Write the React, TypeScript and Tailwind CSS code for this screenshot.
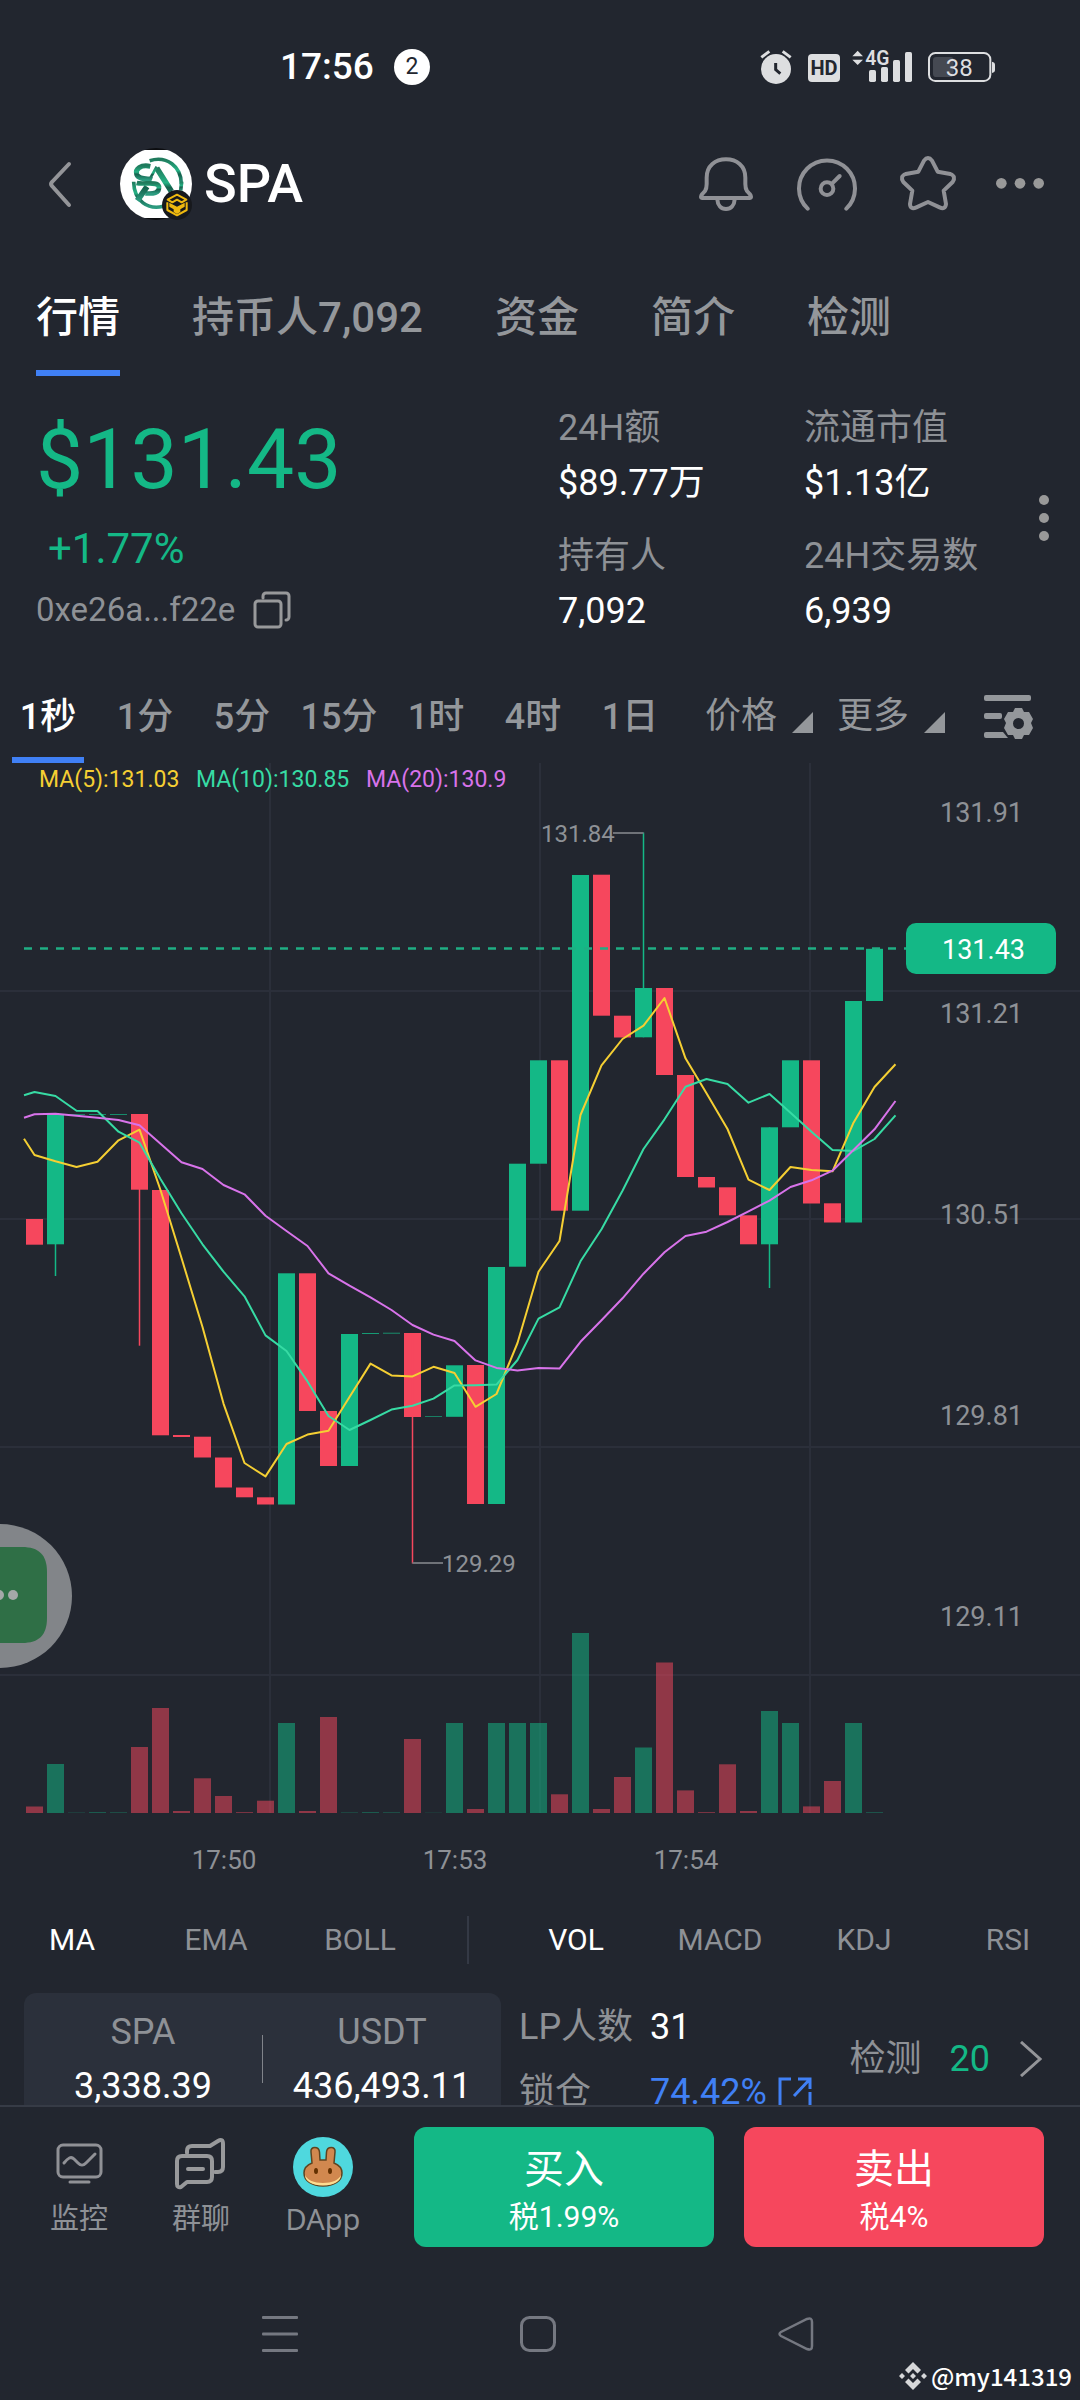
import {useState} from 'react';
import clsx from 'clsx';

type Side = 'up' | 'down';

interface Candle {
  side: Side;
  top: number;
  bottom: number;
  volume: number;
  high?: number;
  low?: number;
}

const GREEN = '#14b886';
const RED = '#f6475d';
const VOLUME_BASE = 1813;
const FIRST_X = 34.5;
const STEP = 21;
const BAR_WIDTH = 17;

const c = (
  side: Side,
  top: number,
  bottom: number,
  volume: number,
  wick: {high?: number; low?: number} = {},
): Candle => ({side, top, bottom, volume, ...wick});

const CANDLES: Candle[] = [
  c('down', 1219, 1244.7, 6.5),
  c('up', 1114.3, 1244.3, 49, {low: 1276}),
  c('up', 1114, 1114.6, 0.3),
  c('up', 1114, 1114.7, 0.7),
  c('up', 1114, 1114.7, 0.5),
  c('down', 1114, 1189.7, 66, {low: 1345.7}),
  c('down', 1190, 1435.3, 105),
  c('down', 1435, 1437, 2),
  c('down', 1436.7, 1457.5, 34.7),
  c('down', 1457.5, 1487.5, 17),
  c('down', 1487.5, 1497.3, 0.8),
  c('down', 1497.3, 1504.5, 12.3),
  c('up', 1273.3, 1504.5, 90),
  c('down', 1273.3, 1411, 2),
  c('down', 1411, 1466, 96),
  c('up', 1334, 1466, 0.4),
  c('up', 1333, 1333.8, 0.7),
  c('up', 1332.8, 1333.5, 0.5),
  c('down', 1333, 1417, 74, {low: 1563.5}),
  c('up', 1416.4, 1417, 0.2),
  c('up', 1365.3, 1416.8, 90),
  c('down', 1365, 1504, 4),
  c('up', 1267, 1504, 90),
  c('up', 1163.7, 1266.7, 90),
  c('up', 1060.3, 1163.7, 90),
  c('down', 1060.3, 1210.7, 18.7),
  c('up', 875, 1210.7, 180),
  c('down', 874.7, 1015.7, 4),
  c('down', 1015.7, 1037.5, 36),
  c('up', 988, 1037.3, 65.5, {high: 832.5}),
  c('down', 988, 1075, 150.5),
  c('down', 1075, 1177, 22.6),
  c('down', 1177, 1187.5, 0.8),
  c('down', 1187.3, 1215.3, 48.7),
  c('down', 1215.3, 1244.3, 2),
  c('up', 1127.3, 1244.3, 102, {low: 1288}),
  c('up', 1060.3, 1127.3, 90),
  c('down', 1060.3, 1203.5, 6.6),
  c('down', 1203.3, 1222.5, 32),
  c('up', 1001, 1222.5, 90),
  c('up', 948.8, 1001, 0.6),
];

// the first value of every series sits on the left edge of the plot
const MA5 = [
  1138.7, 1155, 1161.3, 1167, 1161.7, 1140.3, 1129.7, 1190, 1258, 1327, 1403.6,
  1463, 1476.4, 1444, 1434.6, 1430.7, 1397, 1363.6, 1375.4, 1376.4, 1366.8,
  1373, 1406.8, 1394, 1343, 1271.7, 1241, 1115, 1065.3, 1039, 1025.7, 998,
  1058.3, 1093.3, 1129, 1179.7, 1190, 1167, 1170, 1171.3, 1122.7, 1087, 1064.3,
];
const MA10 = [
  1095.3, 1092, 1096, 1110.7, 1111, 1131.7, 1142.7, 1179, 1213.3, 1244.3,
  1271.7, 1296.3, 1335.4, 1351, 1381.4, 1416, 1430, 1420, 1409.6, 1405.7,
  1398.6, 1385.4, 1385.2, 1384.6, 1360, 1318.6, 1307.3, 1261.3, 1229.3, 1190.7,
  1149, 1119.3, 1086.7, 1079, 1084, 1102.7, 1094, 1112.7, 1131.7, 1150, 1151,
  1139, 1115.3,
];
const MA20 = [
  1117.7, 1114.3, 1113.7, 1115.7, 1117.7, 1120, 1125.3, 1143.7, 1162.3, 1169,
  1185, 1194.3, 1215.7, 1231, 1246, 1273.3, 1285.7, 1297.3, 1310, 1325, 1334.6,
  1341, 1360.4, 1367.9, 1370.4, 1367.9, 1368.6, 1341.8, 1320.2, 1298.3, 1273.7,
  1252.3, 1236, 1231.7, 1222, 1211.3, 1200.7, 1187, 1180.3, 1170.7, 1150,
  1129.3, 1101,
];

const toPoints = (values: number[]) =>
  values
    .map((y, i) => {
      const x = i === 0 ? 24 : Math.min(FIRST_X + (i - 1) * STEP, 896);
      return `${x},${y}`;
    })
    .join(' ');

const TABS = ['行情', '持币人7,092', '资金', '简介', '检测'];
const INTERVALS = ['1秒', '1分', '5分', '15分', '1时', '4时', '1日'];
const PRICE_AXIS = [
  {label: '131.91', y: 822},
  {label: '131.21', y: 1023},
  {label: '130.51', y: 1224},
  {label: '129.81', y: 1425},
  {label: '129.11', y: 1626},
];
const TIME_AXIS = [
  {label: '17:50', x: 224},
  {label: '17:53', x: 455},
  {label: '17:54', x: 686},
];

function StatusBar() {
  return (
    <div className="flex h-[134px] shrink-0 items-center pl-[280px] pr-[84px]">
      <span className="text-[37px] font-medium leading-[48px]">17:56</span>
      <span className="ml-5 flex h-9 w-9 items-center justify-center rounded-full bg-white text-[23px] leading-9 text-[#22262f]">
        2
      </span>
      <svg
        className="ml-auto h-[38px] w-[236px]"
        viewBox="240 54 708 114"
        fill="#dddee0"
        aria-hidden="true"
      >
        {/* alarm */}
        <circle cx="288" cy="117" r="45" />
        <path
          d="M244 82l24-18M332 82l-24-18"
          stroke="#dddee0"
          strokeWidth="9"
          fill="none"
        />
        <path
          d="M287 99v20l14 12"
          stroke="#22262f"
          strokeWidth="9"
          fill="none"
        />
        {/* HD */}
        <rect x="384" y="72" width="96" height="84" rx="12" />
        <text
          x="432"
          y="135"
          fontSize="60"
          fontWeight="700"
          textAnchor="middle"
          fill="#22262f"
        >
          HD
        </text>
        {/* signal */}
        <path d="M517 79l16-17 16 17zM517 89l16 16 16-16z" />
        <text x="556" y="105" fontSize="58" fontWeight="600">
          4G
        </text>
        <rect x="567" y="120" width="21" height="36" rx="5" />
        <rect x="603" y="111" width="21" height="45" rx="5" />
        <rect x="639" y="90" width="21" height="66" rx="5" />
        <rect x="675" y="66" width="21" height="90" rx="5" />
        {/* battery */}
        <rect
          x="747"
          y="69"
          width="184"
          height="84"
          rx="19"
          fill="none"
          stroke="#dddee0"
          strokeWidth="6"
        />
        <rect x="759" y="81" width="62" height="60" rx="10" fill="#454952" />
        <path d="M936 95q9 2 9 9v16q0 7-9 9z" />
        <text x="838" y="137" fontSize="72" textAnchor="middle">
          38
        </text>
      </svg>
    </div>
  );
}

function TokenLogo() {
  return (
    <svg className="ml-12 h-[72px] w-[72px]" viewBox="300 354 216 216">
      <defs>
        <linearGradient id="spa" x1="0" y1="0" x2="0" y2="1">
          <stop offset="0" stopColor="#1f7a5c" />
          <stop offset="0.45" stopColor="#25b285" />
          <stop offset="0.6" stopColor="#14614c" />
          <stop offset="1" stopColor="#2c9c80" />
        </linearGradient>
        <clipPath id="logo">
          <circle cx="408" cy="462" r="108" />
        </clipPath>
      </defs>
      <g clipPath="url(#logo)">
        <rect x="300" y="354" width="216" height="216" fill="#0c0d10" />
        <rect x="300" y="360" width="216" height="204" fill="#fff" />
      </g>
      <g fill="none" stroke="url(#spa)" strokeWidth="11">
        <path d="M389 392C440 376 484 410 484 462" />
        <path d="M341 455C342 515 385 540 430 529" />
        <path
          d="M391 409C362 403 345 417 350 433C356 450 386 445 396 449"
          strokeWidth="15"
        />
        <path
          d="M350 459C370 465 412 452 417 470C419 490 400 492 376 490"
          strokeWidth="14"
        />
        <path d="M381 470L352 512M410 414L454 484" strokeWidth="17" />
        <path d="M410 410L388 450" strokeWidth="8" />
        <path d="M485 455L482 482" strokeWidth="11" />
      </g>
      <circle cx="471" cy="525" r="45" fill="#17191d" />
      <g
        fill="none"
        stroke="#efb90f"
        strokeWidth="6"
        strokeLinejoin="round"
      >
        <path d="M443 509L471 494L499 509L485 517L471 509L457 517Z" />
        <path d="M442 517V540L471 556L500 540V517" />
      </g>
      <path
        d="M448 518L471 530L494 518V530L481 538V546L471 552L461 546V538L448 530Z"
        fill="#efb90f"
      />
    </svg>
  );
}

function Header() {
  return (
    <header className="flex h-[100px] shrink-0 items-center pl-12 pr-[30px]">
      <button type="button" aria-label="返回">
        <svg
          className="h-12 w-6"
          viewBox="0 0 24 48"
          fill="none"
          stroke="#949599"
          strokeWidth="4"
          strokeLinecap="round"
          strokeLinejoin="round"
        >
          <path d="M21 4L4 22Q2 24 4 26L21 45" />
        </svg>
      </button>
      <TokenLogo />
      <h1 className="ml-3 text-[54px] font-medium leading-[64px]">SPA</h1>
      <div className="ml-auto flex items-center gap-[41px] text-[#909196]">
        <button type="button" aria-label="提醒">
          <svg
            className="h-[60px] w-[60px]"
            viewBox="45 372 180 180"
            fill="none"
            stroke="currentColor"
            strokeWidth="12"
            strokeLinejoin="round"
          >
            <path d="M63 504H207C212 504 210 496 206 492L198 483Q193 476 193 462V443C193 407 167 388 135 388C103 388 77 407 77 443V462Q77 476 72 483L64 492C60 496 58 504 63 504Z" />
            <path d="M109 508C110 526 120 537 135 537C150 537 160 526 161 508" />
          </svg>
        </button>
        <button type="button" aria-label="仪表">
          <svg
            className="h-[60px] w-[60px]"
            viewBox="348 372 180 180"
            fill="none"
            stroke="currentColor"
            strokeWidth="12"
            strokeLinecap="round"
          >
            <path d="M380 536A84 84 0 1 1 496 536" />
            <circle cx="438" cy="476" r="19" />
            <path d="M453 461L476 438" />
          </svg>
        </button>
        <button type="button" aria-label="收藏">
          <svg
            className="h-[60px] w-[60px]"
            viewBox="654 372 180 180"
            fill="none"
            stroke="currentColor"
            strokeWidth="12"
            strokeLinejoin="round"
          >
            <path d="M732 392Q744 376 756 392L773 425L811 432Q829 439 818 456L791 482L798 522Q796 540 779 532L744 516L709 532Q691 540 690 522L697 482L670 456Q659 439 677 432L715 425Z" />
          </svg>
        </button>
      </div>
      <button type="button" aria-label="更多操作" className="ml-8">
        <svg
          className="h-[60px] w-[60px]"
          viewBox="930 372 180 180"
          fill="#999"
        >
          <circle cx="964" cy="460" r="16" />
          <circle cx="1020" cy="460" r="16" />
          <circle cx="1076" cy="460" r="16" />
        </svg>
      </button>
    </header>
  );
}

function Tabs() {
  const [active, setActive] = useState(TABS[0]);
  return (
    <nav className="flex shrink-0 gap-[72px] px-9 pt-[52px]">
      {TABS.map((tab) => (
        <button
          key={tab}
          type="button"
          onClick={() => setActive(tab)}
          className={clsx(
            'h-[90px] whitespace-nowrap border-b-[6px] pb-5 text-[42px] font-medium leading-[60px]',
            tab === active
              ? 'border-[#4080f5] text-white'
              : 'border-transparent text-[#94979b]',
          )}
        >
          {tab}
        </button>
      ))}
    </nav>
  );
}

function Stat({label, value}: {label: string; value: string}) {
  return (
    <div className="whitespace-nowrap text-4xl">
      <dt className="leading-[55px] text-[#8e9196]">{label}</dt>
      <dd className="leading-[55px]">{value}</dd>
    </div>
  );
}

function Overview() {
  return (
    <section className="flex shrink-0 pl-9 pr-[30px]">
      <div className="flex-1 pt-[34px]">
        <p className="text-[84px] leading-[100px] text-[#14b886]">$131.43</p>
        <p className="mt-[11px] pl-3 text-[42px] leading-[56px] text-[#14b886]">
          +1.77%
        </p>
        <div className="mt-[13px] flex items-center gap-[18px]">
          <span className="text-[33px] leading-10 text-[#8e9196]">
            0xe26a...f22e
          </span>
          <button type="button" aria-label="复制地址">
            <svg
              className="h-[38px] w-[38px]"
              viewBox="0 0 38 38"
              fill="none"
              stroke="#98999b"
              strokeWidth="3"
              strokeLinecap="round"
              strokeLinejoin="round"
            >
              <rect x="2" y="10" width="26" height="26" rx="3" />
              <path d="M10 7V5a3 3 0 0 1 3-3h20a3 3 0 0 1 3 3v21a3 3 0 0 1-3 3" />
            </svg>
          </button>
        </div>
      </div>
      <dl className="grid grid-cols-[246px_220px] gap-y-[18px] pt-[25px]">
        <Stat label="24H额" value="$89.77万" />
        <Stat label="流通市值" value="$1.13亿" />
        <Stat label="持有人" value="7,092" />
        <Stat label="24H交易数" value="6,939" />
      </dl>
      <button
        type="button"
        aria-label="更多数据"
        className="flex w-[26px] items-center justify-end pt-5"
      >
        <svg className="h-12 w-3" viewBox="0 0 12 48" fill="#999">
          <circle cx="6" cy="6" r="5" />
          <circle cx="6" cy="24" r="5" />
          <circle cx="6" cy="42" r="5" />
        </svg>
      </button>
    </section>
  );
}

function Dropdown({label, options}: {label: string; options: string[]}) {
  return (
    <div className="flex items-center gap-[15px]">
      <select
        aria-label={label}
        className="w-[72px] appearance-none bg-transparent p-0 pb-0.5 text-4xl leading-[48px] text-[#94979b] outline-none"
      >
        {options.map((option) => (
          <option key={option}>{option}</option>
        ))}
      </select>
      <svg className="mt-3 h-[21px] w-[21px]" viewBox="0 0 21 21">
        <path d="M21 0V21H0Z" fill="#94979b" />
      </svg>
    </div>
  );
}

function Intervals() {
  const [active, setActive] = useState(INTERVALS[0]);
  return (
    <div className="mt-[31px] flex h-[93px] shrink-0 items-center pl-3 pr-[46px]">
      <div className="flex h-full gap-[25px]">
        {INTERVALS.map((item) => (
          <button
            key={item}
            type="button"
            onClick={() => setActive(item)}
            className={clsx(
              'flex w-[72px] items-center justify-center whitespace-nowrap border-y-[6px] border-transparent text-4xl font-medium',
              item === active ? 'border-b-[#4080f5] text-white' : 'text-[#94979b]',
            )}
          >
            {item}
          </button>
        ))}
      </div>
      <div className="ml-[39px] flex gap-6">
        <Dropdown label="价格类型" options={['价格', '市值']} />
        <Dropdown label="更多周期" options={['更多', '1周']} />
      </div>
      <button type="button" aria-label="图表设置" className="ml-auto">
        <svg className="h-11 w-[50px]" viewBox="0 0 50 44" fill="#94979b">
          <rect x="0" y="0" width="47" height="6" rx="2" />
          <rect x="0" y="18" width="18" height="6" rx="2" />
          <path d="M2 37H19L24 43H2Q0 43 0 41V39Q0 37 2 37Z" />
          <path
            fillRule="evenodd"
            d="M31 13H38L40 17L45 17L49 24L47 28L49 33L45 40L40 40L38 44H31L29 40L24 40L20 33L22 28L20 24L24 17L29 17ZM34.5 23A5.5 5.5 0 1 0 34.5 34A5.5 5.5 0 1 0 34.5 23Z"
          />
        </svg>
      </button>
    </div>
  );
}

function Chart() {
  return (
    <div className="relative shrink-0">
      <svg
        className="block w-full"
        viewBox="0 763 1080 1128"
        role="img"
        aria-label="SPA K线图"
      >
        <g stroke="#2b2f3a" strokeWidth="2">
          {[270, 540, 810].map((x) => (
            <path key={x} d={`M${x} 763V1813`} />
          ))}
          {[991, 1219, 1447, 1675].map((y) => (
            <path key={y} d={`M0 ${y}H1080`} />
          ))}
        </g>

        {CANDLES.map((candle, i) => {
          const x = FIRST_X + i * STEP;
          const fill = candle.side === 'up' ? GREEN : RED;
          return (
            <g key={i} fill={fill}>
              <rect
                x={x - BAR_WIDTH / 2}
                y={VOLUME_BASE - candle.volume}
                width={BAR_WIDTH}
                height={candle.volume}
                opacity="0.52"
              />
              <rect
                x={x - BAR_WIDTH / 2}
                y={candle.top}
                width={BAR_WIDTH}
                height={candle.bottom - candle.top}
              />
              {(candle.high || candle.low) && (
                <path
                  d={`M${x} ${candle.high ?? candle.top}V${candle.low ?? candle.bottom}`}
                  stroke={fill}
                  strokeWidth="1.5"
                />
              )}
            </g>
          );
        })}

        <path
          d="M24 948.5H906"
          stroke="#1fae84"
          strokeWidth="2.5"
          strokeDasharray="8 8"
        />

        <g fill="none" strokeWidth="2" strokeLinejoin="round">
          <polyline points={toPoints(MA5)} stroke="#f5cf33" />
          <polyline points={toPoints(MA10)} stroke="#37dba4" />
          <polyline points={toPoints(MA20)} stroke="#d873ea" />
        </g>

        <g fontSize="23">
          <text x="39" y="787" fill="#f5cf33">
            MA(5):131.03
          </text>
          <text x="196" y="787" fill="#37dba4">
            MA(10):130.85
          </text>
          <text x="366" y="787" fill="#d873ea">
            MA(20):130.9
          </text>
        </g>

        <g fontSize="24" fill="#8e9196">
          <path
            d="M613 833H643.5M412.5 1563H443"
            stroke="#6f7278"
            strokeWidth="2"
          />
          <text x="541" y="842">
            131.84
          </text>
          <text x="442" y="1572">
            129.29
          </text>
        </g>

        <g fontSize="27" fill="#8e9196">
          {PRICE_AXIS.map(({label, y}) => (
            <text key={label} x="940" y={y}>
              {label}
            </text>
          ))}
        </g>
        <g fontSize="26" fill="#8e9196" textAnchor="middle">
          {TIME_AXIS.map(({label, x}) => (
            <text key={label} x={x} y="1869">
              {label}
            </text>
          ))}
        </g>

        <rect x="906" y="923" width="150" height="51" rx="10" fill={GREEN} />
        <text x="942" y="959" fontSize="27" fill="#fff">
          131.43
        </text>
      </svg>

      {/* floating chat bubble, half hidden behind the left edge */}
      <button
        type="button"
        aria-label="聊天"
        className="absolute left-0 top-[761px] h-36 w-[72px]"
      >
        <svg className="h-36 w-[72px]" viewBox="0 0 72 144">
          <circle cx="0" cy="72" r="72" fill="#828589" />
          <path
            d="M0 23H22C39 23 47 31 47 48V94C47 111 39 119 22 119H0Z"
            fill="#2f6f46"
          />
          <circle cx="-1" cy="71" r="5" fill="#a5a8a9" />
          <circle cx="13" cy="71" r="5" fill="#a5a8a9" />
        </svg>
      </button>
    </div>
  );
}

function IndicatorGroup({items}: {items: string[]}) {
  const [active, setActive] = useState(items[0]);
  return (
    <>
      {items.map((item) => (
        <button
          key={item}
          type="button"
          onClick={() => setActive(item)}
          className={clsx(
            'flex-2 text-center text-[30px] leading-10',
            item === active ? 'text-white' : 'text-[#8e9196]',
          )}
        >
          {item}
        </button>
      ))}
    </>
  );
}

function Indicators() {
  return (
    <div className="flex h-[98px] shrink-0 items-center">
      <IndicatorGroup items={['MA', 'EMA', 'BOLL']} />
      <div className="flex flex-1 justify-center">
        <div className="h-12 w-0.5 bg-[#343945]" />
      </div>
      <IndicatorGroup items={['VOL', 'MACD', 'KDJ', 'RSI']} />
    </div>
  );
}

function Pool() {
  return (
    <section className="mt-1 flex shrink-0 items-start whitespace-nowrap pl-6 pr-[38px] text-4xl">
      <div className="flex w-[477px] items-center rounded-xl bg-[#2b303b] py-3 text-center leading-[54px]">
        <div className="flex-1">
          <p className="text-[#8e9196]">SPA</p>
          <p>3,338.39</p>
        </div>
        <div className="h-12 w-px bg-[#80838a]" />
        <div className="flex-1">
          <p className="text-[#8e9196]">USDT</p>
          <p>436,493.11</p>
        </div>
      </div>
      <dl className="ml-[18px] grid grid-cols-[131px_auto] pt-0.5 leading-[65px]">
        <dt className="text-[#8e9196]">LP人数</dt>
        <dd>31</dd>
        <dt className="text-[#8e9196]">锁仓</dt>
        <dd>
          <a href="#lock" className="flex items-center gap-2.5 text-[#4080f5]">
            74.42%
            <svg
              className="h-9 w-9"
              viewBox="0 0 36 36"
              fill="none"
              stroke="currentColor"
              strokeWidth="3"
            >
              <path d="M14 4H3V34H33V17M21 4H33V14M33 4L17 21" />
            </svg>
          </a>
        </dd>
      </dl>
      <button
        type="button"
        className="ml-auto flex h-[132px] items-center text-[#8e9196]"
      >
        检测
        <span className="ml-7 text-[#14b886]">20</span>
        <svg
          className="ml-[30px] h-9 w-[22px]"
          viewBox="0 0 22 36"
          fill="none"
          stroke="#949599"
          strokeWidth="3"
        >
          <path d="M1 1L20 18L1 35" />
        </svg>
      </button>
    </section>
  );
}

function ActionBar() {
  const shortcut =
    'flex w-[122px] flex-col items-center gap-0.5 pt-2.5 text-[29px] leading-10 text-[#8e9196]';
  const trade =
    'flex h-[120px] flex-1 flex-col items-center gap-[3px] rounded-xl pt-[19px]';
  return (
    <div className="flex items-start border-t-2 border-[#363b46] pl-[18px] pr-9 pt-5">
      <button type="button" className={shortcut}>
        <svg
          className="h-[60px] w-[60px]"
          viewBox="0 0 60 60"
          fill="none"
          stroke="#909196"
          strokeWidth="3"
          strokeLinecap="round"
        >
          <rect x="9" y="8" width="43" height="32" rx="5" />
          <path d="M15 26C19 21 22 19 25 22L29 26C32 29 34 29 37 26L46 17M21 45H40" />
        </svg>
        监控
      </button>
      <button type="button" className={shortcut}>
        <svg
          className="h-[60px] w-[60px]"
          viewBox="0 0 60 60"
          fill="none"
          stroke="#98999b"
          strokeWidth="4"
          strokeLinecap="round"
          strokeLinejoin="round"
        >
          <path d="M12 19H36Q41 19 41 24V40Q41 45 36 45H16L10 50Q6 51 6 47V24Q6 19 11 19Z" />
          <path d="M16 16V14Q16 9 21 9H39L47 4Q52 1 52 7V30Q52 35 47 35H44M17 32H32" />
        </svg>
        群聊
      </button>
      <button type="button" className={shortcut}>
        <svg className="h-[60px] w-[60px]" viewBox="0 0 60 60">
          <circle cx="30" cy="30" r="30" fill="#4fd8de" />
          <path
            d="M19 26L18 15C17 9 26 9 26.5 15L27 23H33L33.5 15C34 9 43 9 42 15L41 26C46 28 49 31 49 36C49 44 41 49 30 49S11 44 11 36C11 31 14 28 19 26Z"
            fill="#d1884f"
            stroke="#5f4420"
            strokeWidth="1.5"
          />
          <path
            d="M12 38C14 43 21 46 30 46S46 43 48 38C48 44 41 48.5 30 48.5S12 44 12 38Z"
            fill="#fedc90"
          />
          <ellipse cx="23" cy="34" rx="2" ry="3" fill="#633001" />
          <ellipse cx="37" cy="34" rx="2" ry="3" fill="#633001" />
        </svg>
        <span className="font-['Noto_Sans',sans-serif]">DApp</span>
      </button>
      <div className="ml-[30px] flex flex-1 gap-[30px]">
        <button type="button" className={clsx(trade, 'bg-[#14b886]')}>
          <span className="text-[40px] leading-[48px]">买入</span>
          <span className="text-[30px] leading-10">税1.99%</span>
        </button>
        <button type="button" className={clsx(trade, 'bg-[#f6475d]')}>
          <span className="text-[40px] leading-[48px]">卖出</span>
          <span className="text-[30px] leading-10">税4%</span>
        </button>
      </div>
    </div>
  );
}

function SystemNav() {
  return (
    <div className="relative flex h-[153px] items-center justify-center gap-[222px] pr-1 pt-[21px]">
      <button type="button" aria-label="最近任务">
        <svg className="h-9 w-9" viewBox="0 0 36 36" fill="#757881">
          <rect y="0" width="36" height="3" rx="1" />
          <rect y="16.5" width="36" height="3" rx="1" />
          <rect y="33" width="36" height="3" rx="1" />
        </svg>
      </button>
      <button type="button" aria-label="主屏幕">
        <svg
          className="h-9 w-9"
          viewBox="0 0 36 36"
          fill="none"
          stroke="#757881"
          strokeWidth="3"
        >
          <rect x="1.5" y="1.5" width="33" height="33" rx="8" />
        </svg>
      </button>
      <button type="button" aria-label="后退">
        <svg
          className="h-9 w-9"
          viewBox="0 0 36 36"
          fill="none"
          stroke="#757881"
          strokeWidth="2.5"
        >
          <path d="M29 3Q34 1 34 6V30Q34 35 29 33L3 20Q0 18 3 16Z" />
        </svg>
      </button>
      <div className="absolute bottom-0 right-2 flex items-center gap-1 font-['Noto_Sans_CJK_SC',sans-serif] text-2xl font-medium leading-[48px]">
        <svg className="h-7 w-7" viewBox="0 0 28 28" fill="#d6d7d9">
          <path d="M14 0L22 8L18.5 11.5L14 7L9.5 11.5L6 8ZM14 28L22 20L18.5 16.5L14 21L9.5 16.5L6 20ZM14 11L17 14L14 17L11 14ZM3 11L6 14L3 17L0 14ZM25 11L28 14L25 17L22 14Z" />
        </svg>
        @my141319
      </div>
    </div>
  );
}

export default function App() {
  return (
    <div className="flex h-screen flex-col overflow-hidden bg-[#22262f] font-[Roboto,'Noto_Sans_CJK_SC',sans-serif] text-white">
      <StatusBar />
      <Header />
      <main className="flex min-h-0 flex-1 flex-col overflow-y-auto [scrollbar-width:none]">
        <Tabs />
        <Overview />
        <Intervals />
        <Chart />
        <Indicators />
        <Pool />
      </main>
      <footer className="shrink-0">
        <ActionBar />
        <SystemNav />
      </footer>
    </div>
  );
}
